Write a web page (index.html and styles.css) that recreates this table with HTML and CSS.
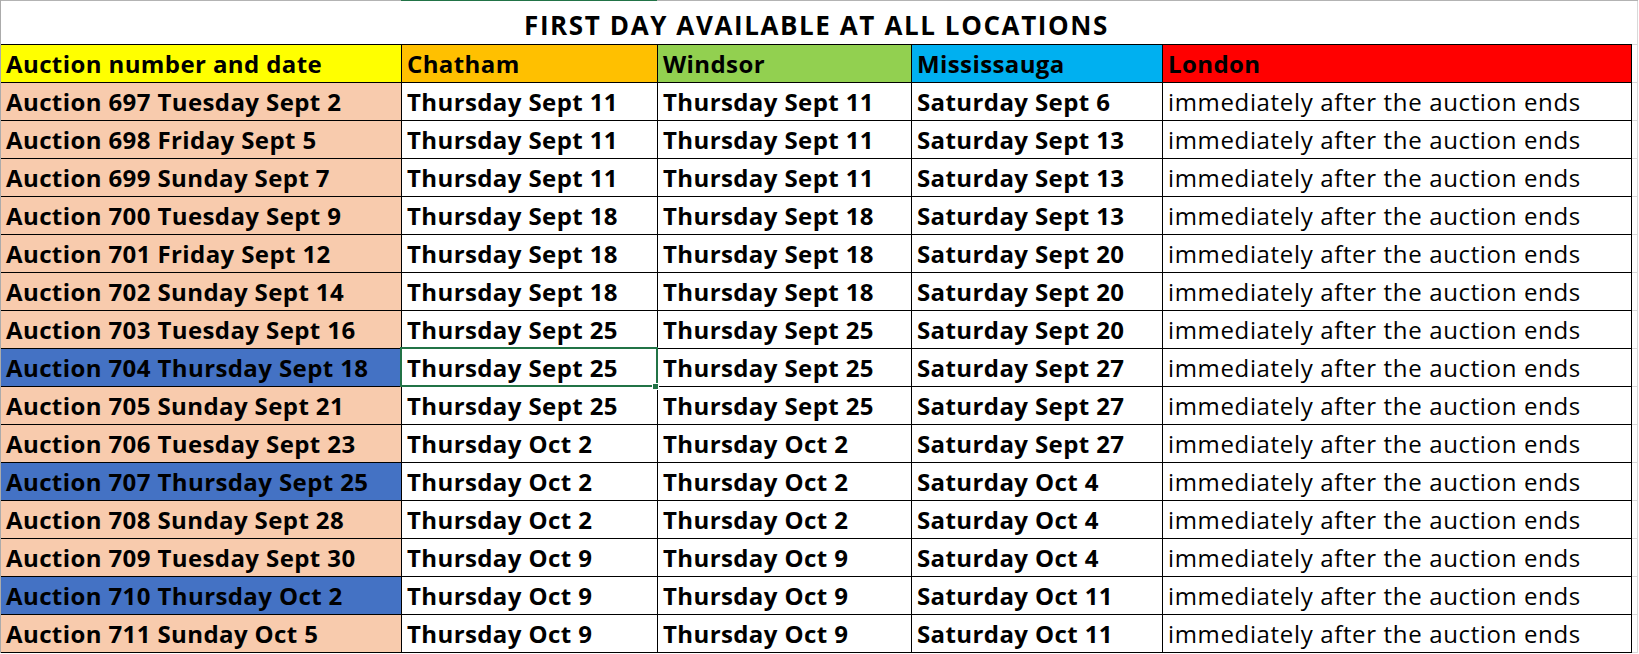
FILE: index.html
```html
<!DOCTYPE html>
<html lang="en">
<head>
<meta charset="utf-8">
<title>First day available at all locations</title>
<link rel="stylesheet" href="styles.css">
</head>
<body>
<div class="sheet">
  <div class="topline"><span class="tl-a"></span><span class="tl-sel"></span><span class="tl-b"></span></div>
  <div class="title-row"><div class="title">FIRST DAY AVAILABLE AT ALL LOCATIONS</div><div class="gap"></div></div>
  <table class="grid">
    <colgroup><col class="c1"><col class="c2"><col class="c3"><col class="c4"><col class="c5"><col class="c6"></colgroup>
    <thead>
      <tr>
        <th class="h-yellow">Auction number and date</th>
        <th class="h-orange">Chatham</th>
        <th class="h-green">Windsor</th>
        <th class="h-blue">Mississauga</th>
        <th class="h-red">London</th>
        <th class="extra"></th>
      </tr>
    </thead>
    <tbody>
      <tr><td class="peach">Auction 697 Tuesday Sept 2</td><td>Thursday Sept 11</td><td>Thursday Sept 11</td><td>Saturday Sept 6</td><td class="reg">immediately after the auction ends</td><td class="extra"></td></tr>
      <tr><td class="peach">Auction 698 Friday Sept 5</td><td>Thursday Sept 11</td><td>Thursday Sept 11</td><td>Saturday Sept 13</td><td class="reg">immediately after the auction ends</td><td class="extra"></td></tr>
      <tr><td class="peach">Auction 699 Sunday Sept 7</td><td>Thursday Sept 11</td><td>Thursday Sept 11</td><td>Saturday Sept 13</td><td class="reg">immediately after the auction ends</td><td class="extra"></td></tr>
      <tr><td class="peach">Auction 700 Tuesday Sept 9</td><td>Thursday Sept 18</td><td>Thursday Sept 18</td><td>Saturday Sept 13</td><td class="reg">immediately after the auction ends</td><td class="extra"></td></tr>
      <tr><td class="peach">Auction 701 Friday Sept 12</td><td>Thursday Sept 18</td><td>Thursday Sept 18</td><td>Saturday Sept 20</td><td class="reg">immediately after the auction ends</td><td class="extra"></td></tr>
      <tr><td class="peach">Auction 702 Sunday Sept 14</td><td>Thursday Sept 18</td><td>Thursday Sept 18</td><td>Saturday Sept 20</td><td class="reg">immediately after the auction ends</td><td class="extra"></td></tr>
      <tr><td class="peach">Auction 703 Tuesday Sept 16</td><td>Thursday Sept 25</td><td>Thursday Sept 25</td><td>Saturday Sept 20</td><td class="reg">immediately after the auction ends</td><td class="extra"></td></tr>
      <tr><td class="navy">Auction 704 Thursday Sept 18</td><td class="selected">Thursday Sept 25<span class="sel-box"></span><span class="sel-handle"></span></td><td>Thursday Sept 25</td><td>Saturday Sept 27</td><td class="reg">immediately after the auction ends</td><td class="extra"></td></tr>
      <tr><td class="peach">Auction 705 Sunday Sept 21</td><td>Thursday Sept 25</td><td>Thursday Sept 25</td><td>Saturday Sept 27</td><td class="reg">immediately after the auction ends</td><td class="extra"></td></tr>
      <tr><td class="peach">Auction 706 Tuesday Sept 23</td><td>Thursday Oct 2</td><td>Thursday Oct 2</td><td>Saturday Sept 27</td><td class="reg">immediately after the auction ends</td><td class="extra"></td></tr>
      <tr><td class="navy">Auction 707 Thursday Sept 25</td><td>Thursday Oct 2</td><td>Thursday Oct 2</td><td>Saturday Oct 4</td><td class="reg">immediately after the auction ends</td><td class="extra"></td></tr>
      <tr><td class="peach">Auction 708 Sunday Sept 28</td><td>Thursday Oct 2</td><td>Thursday Oct 2</td><td>Saturday Oct 4</td><td class="reg">immediately after the auction ends</td><td class="extra"></td></tr>
      <tr><td class="peach">Auction 709 Tuesday Sept 30</td><td>Thursday Oct 9</td><td>Thursday Oct 9</td><td>Saturday Oct 4</td><td class="reg">immediately after the auction ends</td><td class="extra"></td></tr>
      <tr><td class="navy">Auction 710 Thursday Oct 2</td><td>Thursday Oct 9</td><td>Thursday Oct 9</td><td>Saturday Oct 11</td><td class="reg">immediately after the auction ends</td><td class="extra"></td></tr>
      <tr><td class="peach">Auction 711 Sunday Oct 5</td><td>Thursday Oct 9</td><td>Thursday Oct 9</td><td>Saturday Oct 11</td><td class="reg">immediately after the auction ends</td><td class="extra"></td></tr>
    </tbody>
  </table>
</div>
</body>
</html>
```

FILE: styles.css
```css
* { box-sizing: border-box; }

html, body {
  margin: 0;
  padding: 0;
  background: #ffffff;
}

body {
  font-family: "Open Sans", "Noto Sans", "Liberation Sans", Arial, sans-serif;
  color: #000000;
  overflow: hidden;
}

.sheet {
  width: 1638px;
  border-left: 1px solid #ababab;
}

.topline {
  display: flex;
  height: 1px;
}
.tl-a { width: 400px; background: #b3b3b3; }
.tl-sel { width: 256px; background: #217346; }
.tl-b { flex: 1; background: #b3b3b3; }

.title-row {
  display: flex;
  height: 43px;
}
.title {
  width: 1631px;
  display: flex;
  align-items: flex-end;
  justify-content: center;
  padding-bottom: 5px;
  font-size: 26px;
  line-height: 28px;
  font-weight: 700;
  letter-spacing: 1.6px;
  white-space: nowrap;
}
.gap {
  width: 6px;
  border-right: 1px solid #d9d9d9;
}

.grid {
  width: 1637px;
  table-layout: fixed;
  border-collapse: separate;
  border-spacing: 0;
}
.c1 { width: 401px; }
.c2 { width: 256px; }
.c3 { width: 254px; }
.c4 { width: 251px; }
.c5 { width: 469px; }
.c6 { width: 6px; }

.grid th,
.grid td {
  height: 38px;
  padding: 0 0 4px 5px;
  border-right: 1px solid #000;
  border-bottom: 1px solid #000;
  vertical-align: bottom;
  text-align: left;
  white-space: nowrap;
  overflow: visible;
  font-size: 24px;
  line-height: 28px;
  font-weight: 700;
  letter-spacing: 0.4px;
}

.grid th {
  height: 39px;
  border-top: 1px solid #000;
}

.grid .extra {
  padding: 0;
  border-right: 1px solid #d9d9d9;
  border-bottom: 1px solid #d9d9d9;
}
.grid th.extra { border-top: 1px solid #d9d9d9; }

.h-yellow { background: #ffff00; }
.h-orange { background: #ffc000; }
.h-green { background: #92d050; }
.h-blue { background: #00b0f0; }
.h-red { background: #ff0000; }

.peach { background: #f8cbad; }
.navy { background: #4472c4; }

.grid td.reg {
  font-weight: 400;
  letter-spacing: 0.65px;
}

.selected { position: relative; }
.sel-box {
  position: absolute;
  left: -2px;
  top: -2px;
  width: 258px;
  height: 40px;
  border: 2px solid #217346;
  pointer-events: none;
}
.sel-handle {
  position: absolute;
  left: 250px;
  top: 34px;
  width: 7px;
  height: 7px;
  background: #217346;
  border: 1px solid #ffffff;
}
```
